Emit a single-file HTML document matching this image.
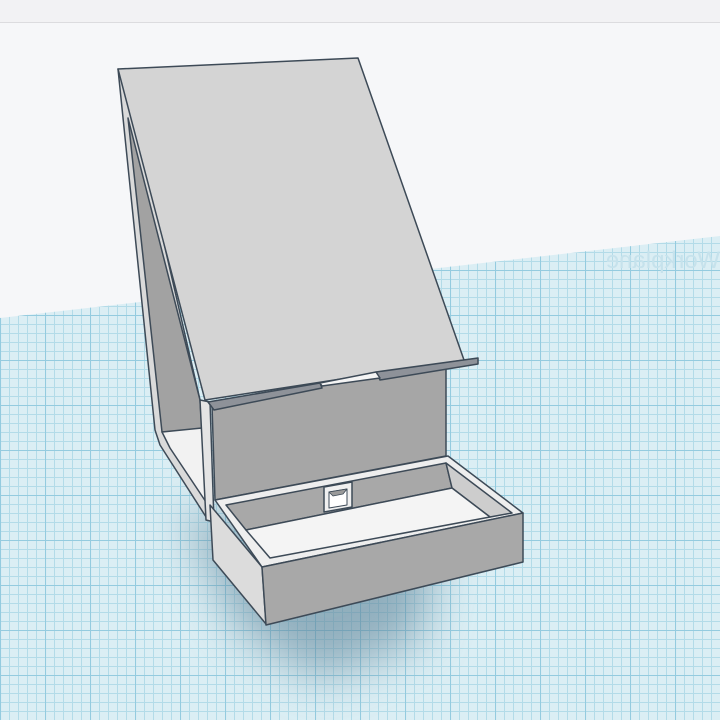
<!DOCTYPE html>
<html><head><style>
html,body{margin:0;padding:0;width:720px;height:720px;overflow:hidden;background:#f6f7f9}
svg{display:block}
</style></head><body>
<svg width="720" height="720" viewBox="0 0 720 720" xmlns="http://www.w3.org/2000/svg">
<defs>
<pattern id="g" width="9" height="9" patternUnits="userSpaceOnUse">
<rect width="9" height="9" fill="#dbeef4"/>
<path d="M0 0.5H9M0.5 0V9" stroke="#b3dbe8" stroke-width="1"/>
</pattern>
<pattern id="G" width="45" height="45" patternUnits="userSpaceOnUse">
<path d="M0 0.5H45M0.5 0V45" stroke="#94cbdf" stroke-width="1.1"/>
</pattern>
<filter id="b" x="-50%" y="-50%" width="200%" height="200%"><feGaussianBlur stdDeviation="24"/></filter>
</defs>
<rect width="720" height="720" fill="#f6f7f9"/>
<rect width="720" height="22" fill="#f2f2f4"/>
<line x1="0" y1="22.5" x2="720" y2="22.5" stroke="#dcdcdf"/>
<polygon points="0,318 720,236 720,720 0,720" fill="url(#g)"/>
<polygon points="0,318 720,236 720,720 0,720" fill="url(#G)"/>
<text x="610" y="268" font-family="Liberation Sans,sans-serif" font-size="24" fill="#c6e2ec" transform="scale(-1,1) translate(-1330,0)">Workplane</text>
<polygon points="180,510 440,540 420,640 320,680 240,630" fill="#5f8499" opacity="0.6" filter="url(#b)"/>
<g stroke="#3d4a57" stroke-width="1.5" stroke-linejoin="round">
<polygon points="118,69 126,78 200,400 208,520 160,445 155,430" fill="#dadada"/>
<polygon points="128,118 200,400 202,432 162,432" fill="#a2a2a2"/>
<polygon points="162,432 202,428 208,505 170,448" fill="#f2f2f2"/>
<polygon points="200,400 210,402 214,522 206,520" fill="#e4e4e4"/>
<polygon points="212,405 446,362 446,456 215,500" fill="#a6a6a6"/>
<polygon points="118,69 358,58 464,360 205,400" fill="#d4d4d4"/>
<polygon points="208,402 320,383 322,388 214,410" fill="#8e9299"/>
<polygon points="376,372 478,358 478,364 380,380" fill="#8e9299"/>
<polygon points="320,383 376,372 380,378 322,386" fill="#f4f4f4"/>
<polygon points="210,505 262,567 266,624 213,560" fill="#dcdcdc"/>
<polygon points="215,500 448,456 523,513 262,567" fill="#eeeeee"/>
<polygon points="226,505 446,463 452,488 246,530" fill="#a8a8a8"/>
<polygon points="446,463 512,513 490,517 452,488" fill="#cdcdcd"/>
<polygon points="246,530 452,488 490,517 270,558" fill="#f4f4f4"/>
<polygon points="262,567 523,513 523,562 266,625" fill="#a8a8a8"/>
<polygon points="324,487 352,482 352,507 324,512" fill="#f0f0f0"/>
<polygon points="329,492 347,489 347,505 329,508" fill="#ffffff" stroke-width="1"/>
<polygon points="329,492 347,489 343,494 333,496" fill="#9a9a9a" stroke-width="0.8"/>
</g>
</svg>
</body></html>
